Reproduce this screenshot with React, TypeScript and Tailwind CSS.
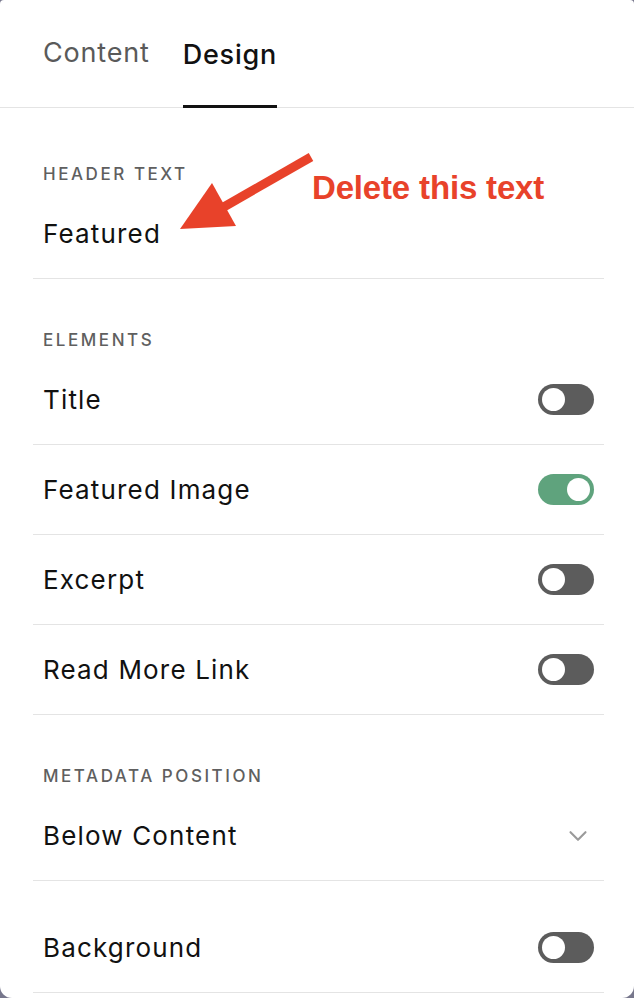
import { ChevronDown } from 'lucide-react';

interface Row {
  label: string;
  on: boolean;
}

const elements: Row[] = [
  { label: 'Title', on: false },
  { label: 'Featured Image', on: true },
  { label: 'Excerpt', on: false },
  { label: 'Read More Link', on: false },
];

function Toggle({ on }: { on: boolean }) {
  return (
    <div
      className={
        on
          ? 'w-[56px] h-[31px] rounded-full bg-[#5fa37d] flex items-center justify-end px-[4px]'
          : 'w-[56px] h-[31px] rounded-full bg-[#5c5c5c] flex items-center justify-start px-[4px]'
      }
    >
      <div className="w-[23px] h-[23px] rounded-full bg-white" />
    </div>
  );
}

function SectionLabel({ children }: { children: string }) {
  return (
    <p className="px-[10px] text-[17px] leading-[20px] tracking-[0.15em] font-medium text-[#5f5f5f] uppercase">
      {children}
    </p>
  );
}

export default function App() {
  return (
    <div className="w-full h-[998px] bg-[#77778c] font-['Inter',sans-serif]">
      <div className="relative h-full bg-white rounded-t-[4px] rounded-b-[12px] overflow-hidden">
        {/* tabs */}
        <header className="h-[108px] border-b border-[#e4e4e4] flex items-stretch gap-[33px] px-[43px]">
          <button className="text-[27px] text-[#5a5a5a] tracking-[0.03em] pt-[35px] self-start leading-[36px]">
            Content
          </button>
          <button className="relative text-[27px] font-medium text-[#111] tracking-[0.03em] pt-[35px] leading-[36px]">
            <span className="block h-[69px]">Design</span>
            <span className="absolute left-0 right-0 bottom-[-1px] h-[3px] bg-[#111]" />
          </button>
        </header>

        <div className="pl-[33px] pr-[30px] text-[26px] tracking-[0.045em] text-[#111]">
          <section className="pt-[56px] pb-[29px] border-b border-[#e4e4e4]">
            <SectionLabel>Header Text</SectionLabel>
            <p className="px-[10px] mt-[35px] leading-[30px]">Featured</p>
          </section>

          <section className="pt-[51px]">
            <SectionLabel>Elements</SectionLabel>
            <div className="mt-[5px]">
              {elements.map((row) => (
                <div
                  key={row.label}
                  className="h-[90px] border-b border-[#e4e4e4] flex items-center justify-between px-[10px]"
                >
                  <span>{row.label}</span>
                  <Toggle on={row.on} />
                </div>
              ))}
            </div>
          </section>

          <section className="pt-[51px]">
            <SectionLabel>Metadata Position</SectionLabel>
            <div className="mt-[5px] h-[90px] border-b border-[#e4e4e4] flex items-center justify-between px-[10px]">
              <span>Below Content</span>
              <ChevronDown className="w-[30px] h-[30px] text-[#9b9b9b] mr-[1px]" strokeWidth={1.7} />
            </div>
          </section>

          <div className="mt-[22px] h-[90px] border-b border-[#e4e4e4] flex items-center justify-between px-[10px]">
            <span>Background</span>
            <Toggle on={false} />
          </div>
        </div>

        {/* annotation */}
        <svg className="absolute left-0 top-0" width="634" height="300" viewBox="0 0 634 300">
          <line x1="311" y1="157" x2="222" y2="208" stroke="#e8422a" strokeWidth="9" />
          <polygon points="212,183 236,226 180,229" fill="#e8422a" />
        </svg>
        <span className="absolute left-[312px] top-[168px] text-[33px] leading-[40px] font-bold text-[#e8422a] font-['Liberation_Sans',sans-serif] tracking-[-0.005em]">
          Delete this text
        </span>
      </div>
    </div>
  );
}
